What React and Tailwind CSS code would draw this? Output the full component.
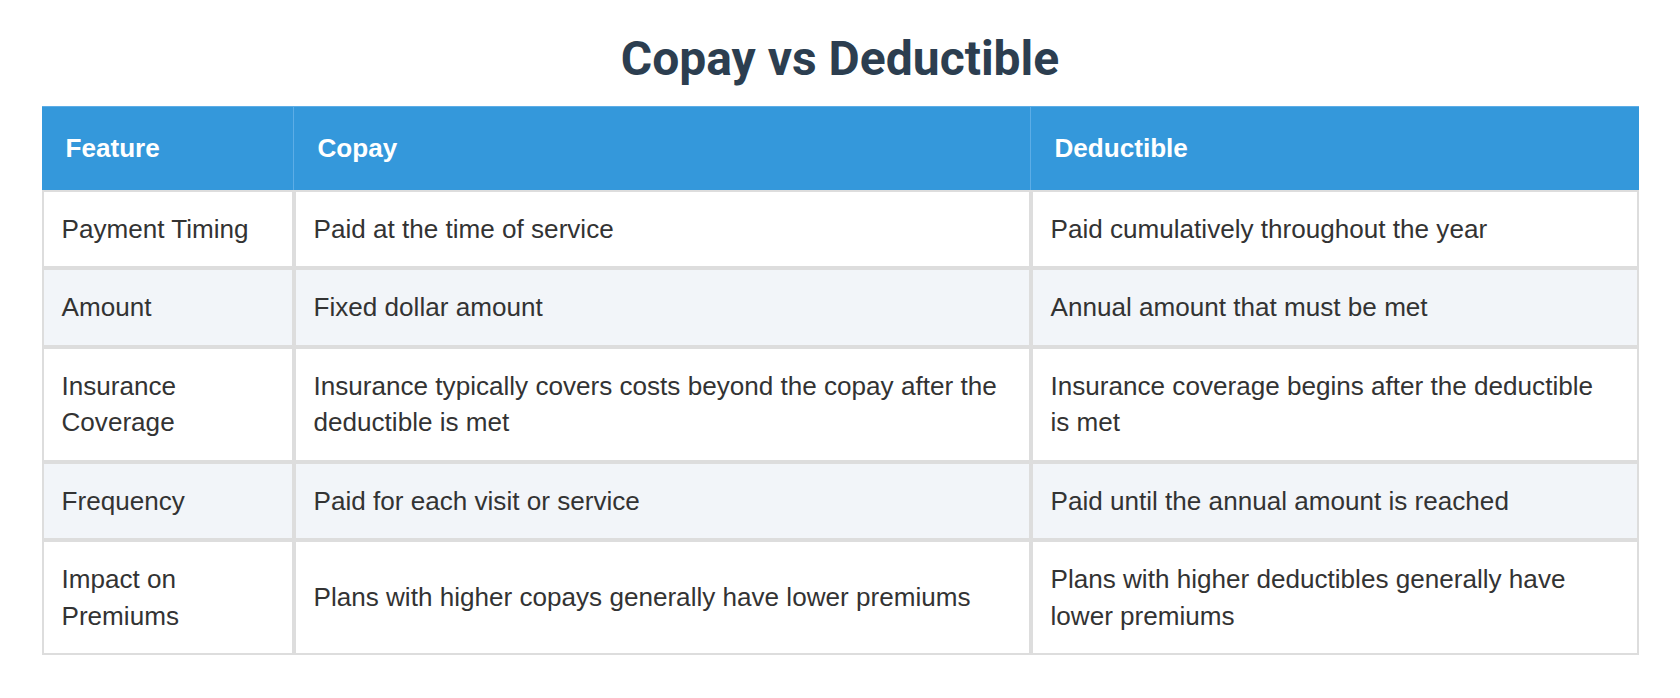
import React from 'react';

const rows = [
    { feature: 'Payment Timing', copay: 'Paid at the time of service', deductible: 'Paid cumulatively throughout the year' },
    { feature: 'Amount', copay: 'Fixed dollar amount', deductible: 'Annual amount that must be met' },
    { feature: 'Insurance Coverage', copay: 'Insurance typically covers costs beyond the copay after the deductible is met', deductible: 'Insurance coverage begins after the deductible is met' },
    { feature: 'Frequency', copay: 'Paid for each visit or service', deductible: 'Paid until the annual amount is reached' },
    { feature: 'Impact on Premiums', copay: 'Plans with higher copays generally have lower premiums', deductible: 'Plans with higher deductibles generally have lower premiums' },
];

const App = () => {
    return (
        <div className="min-h-screen bg-white">
            {/* Title */}
            <h1 className="pt-[31px] pb-[19px] text-center text-[48px] leading-[56px] font-bold text-[#2c3e50] [font-family:Roboto,'Liberation_Sans',sans-serif]">
                Copay vs Deductible
            </h1>

            {/* Comparison table */}
            <table className="mx-auto w-[1597px] table-fixed border-separate border-spacing-0 text-[26.1px] leading-[36.5px] text-[#333333] [font-family:'Liberation_Sans',Arial,sans-serif]">
                <colgroup>
                    <col className="w-[252px]" />
                    <col className="w-[737px]" />
                    <col className="w-[608px]" />
                </colgroup>
                <thead>
                    <tr className="bg-[#3498db] text-white">
                        <th className="border-t border-r border-[#5dade6] px-[24px] py-[23px] text-left font-bold">Feature</th>
                        <th className="border-t border-r border-[#5dade6] px-[24px] py-[23px] text-left font-bold">Copay</th>
                        <th className="border-t border-[#5dade6] px-[24px] py-[23px] text-left font-bold">Deductible</th>
                    </tr>
                </thead>
                <tbody>
                    {rows.map((row, i) => (
                        <tr key={row.feature} className={i % 2 === 1 ? 'bg-[#f2f5f9]' : 'bg-white'}>
                            <td className="border-2 border-[#dddddd] px-[18px] py-[19px] align-middle">{row.feature}</td>
                            <td className="border-2 border-[#dddddd] px-[18px] py-[19px] align-middle">{row.copay}</td>
                            <td className="border-2 border-[#dddddd] pl-[18px] pr-[22px] py-[19px] align-middle">{row.deductible}</td>
                        </tr>
                    ))}
                </tbody>
            </table>
        </div>
    );
};

export default App;
